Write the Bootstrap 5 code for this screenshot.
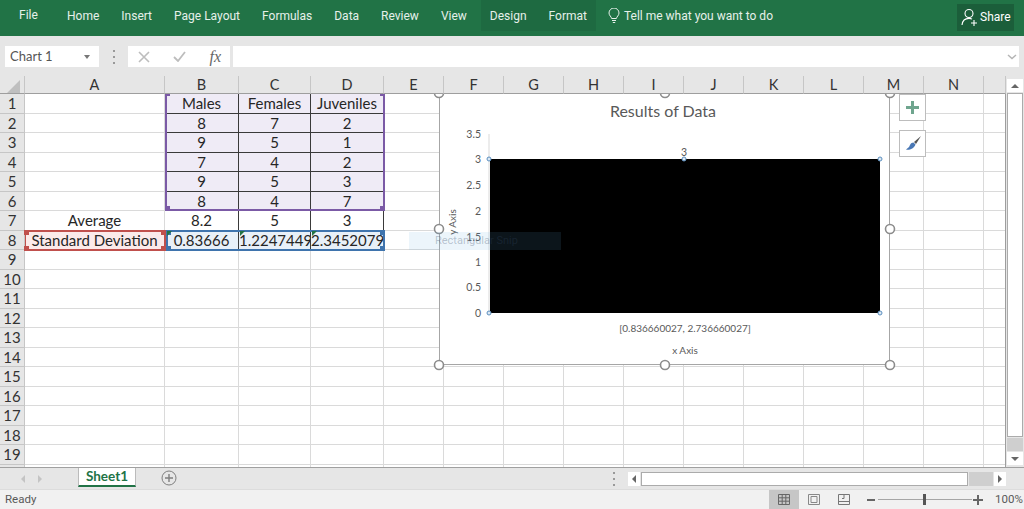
<!DOCTYPE html>
<html lang="en">
<head>
    <meta charset="UTF-8">
    <title>Results of Data - Excel</title>
    <link href="https://cdn.jsdelivr.net/npm/bootstrap@5.3.0/dist/css/bootstrap.min.css" rel="stylesheet">
    <style>
        html, body { height: 100%; }
        body { overflow: hidden; background: #e6e6e6; font-family: Roboto, sans-serif; }
        .xl-app { height: 509px; width: 1024px; }

        .xl-ribbon { height: 36px; background: #217346; color: #e6f0ea; font-size: 12px; padding-bottom: 5px; }
        .xl-file { width: 56px; padding-left: 19px; margin-top: -1px; }
        .xl-tab { padding: 0 11px; }
        .xl-tools { margin-left: 3px; padding: 0 2px; height: 31px; background: #1e6a41; }
        .xl-tools .xl-tab { padding: 0 7px 0 7px; }
        .xl-tools .xl-tab + .xl-tab { padding-left: 15px; }
        .xl-tell { margin-left: 12px; gap: 4px; }
        .xl-share { margin-left: auto; margin-right: 10px; margin-top: 3px; width: 57px; height: 27px; background: #1b5e3a; gap: 2px; color: #fff; padding-left: 4px; }

        .xl-fbar { height: 40px; padding: 10px 5px 9px; }
        .xl-namebox { width: 94px; background: #fff; font-family: Lato, sans-serif; font-size: 13px; color: #555; padding: 0 5px; }
        .xl-caret { width: 0; height: 0; border: 3px solid transparent; border-top: 4px solid #777; border-bottom: 0; }
        .xl-grip { width: 29px; }
        .xl-grip i { display: block; width: 2px; height: 2px; margin: 2px 0; background: #999; }
        .xl-fbtns { width: 102px; background: #fff; padding: 0 9px 0 10px; margin-right: 3px; }
        .xl-fx { font-family: "Liberation Serif", serif; font-style: italic; font-size: 16px; color: #666; }
        .xl-input { flex: 1; background: #fff; padding-right: 2px; }

        .xl-sheet { height: 391px; }
        .xl-main { width: 1006px; }
        .xl-cols, .xl-body { display: grid; grid-template-columns: 25px 140px 74px 72px 73px repeat(10, 60px) 22px; }
        .xl-cols { height: 18px; grid-template-rows: 18px; font-family: Lato, sans-serif; font-size: 14.5px; color: #333; }
        .xl-col { border-right: 1px solid #c6c6c6; border-bottom: 1px solid #9e9e9e; line-height: 18px; text-align: center; }
        .xl-corner { border-bottom: 1px solid #9e9e9e; border-right: 1px solid #c6c6c6; }
        .xl-corner svg { display: block; }
        .xl-wrap { height: 373px; background: #fff; border-right: 1px solid #9e9e9e; }
        .xl-body { grid-auto-rows: 19.5px; font-family: Lato, sans-serif; font-size: 15px; color: #262626; }
        .xl-cell { border-right: 1px solid #dadada; border-bottom: 1px solid #dadada; line-height: 19px; text-align: center; white-space: nowrap; overflow: hidden; }
        .xl-row { background: #e6e6e6; border-right: 1px solid #c6c6c6; border-bottom: 1px solid #c6c6c6; color: #333; }
        .xl-dark { border-color: #3a3a3a; }
        .xl-purple { background: #efebf6; }
        .xl-red { background: #fbeaea; }
        .xl-blue { background: #e8f0f8; }

        .xl-range { position: absolute; pointer-events: none; }
        .xl-range b { position: absolute; width: 5px; height: 5px; }
        .xl-range b:nth-child(1) { left: -2px; top: -2px; }
        .xl-range b:nth-child(2) { right: -2px; top: -2px; }
        .xl-range b:nth-child(3) { left: -2px; bottom: -2px; }
        .xl-range b:nth-child(4) { right: -2px; bottom: -2px; }
        .xl-r-purple { left: 165px; top: -1px; width: 220px; height: 118px; border-left: 2px solid #7b5aa6; border-right: 2px solid #7b5aa6; border-bottom: 2px solid #7b5aa6; }
        .xl-r-purple b { background: #7b5aa6; }
        .xl-r-red { left: 25px; top: 136px; width: 141px; height: 21px; border: 2px solid #c0504d; border-left-width: 1px; }
        .xl-r-red b { background: #c0504d; }
        .xl-r-blue { left: 166px; top: 136px; width: 219px; height: 21px; border: 2px solid #3f74ad; }
        .xl-r-blue b { background: #3f74ad; }
        .xl-flag { position: absolute; top: 137px; width: 0; height: 0; border-top: 5px solid #217346; border-right: 5px solid transparent; }

        .xl-chart { position: absolute; left: 439px; top: -1px; width: 451px; height: 272px; background: #fff; border: 1px solid #a6a6a6; }
        .xl-chart svg { position: absolute; left: -1px; top: -1px; overflow: visible; font-family: Lato, sans-serif; }
        .xl-float { position: absolute; left: 899px; width: 27px; height: 27px; background: #fff; border: 1px solid #bdbdbd; }
        .xl-snip { position: absolute; left: 409px; top: 138px; width: 152px; height: 18px; background: rgba(100, 170, 220, .12); font-size: 11px; line-height: 18px; color: rgba(50, 70, 100, .3); padding-left: 26px; }

        .xl-vbar { width: 18px; padding: 3px 1px 2px 1px; gap: 1px; }
        .xl-sbtn { background: #fff; flex: none; }
        .xl-up { height: 13px; }
        .xl-thumb { height: 344px; background: #fff; border: 1px solid #ababab; }
        .xl-track { flex: 1; background: #cfcfcf; }
        .xl-down { height: 13px; }
        .xl-arr-u { width: 0; height: 0; border: 4px solid transparent; border-bottom: 4px solid #666; border-top: 0; }
        .xl-arr-d { width: 0; height: 0; border: 4px solid transparent; border-top: 4px solid #666; border-bottom: 0; }
        .xl-arr-l { width: 0; height: 0; border: 4px solid transparent; border-right: 4px solid #666; border-left: 0; }
        .xl-arr-r { width: 0; height: 0; border: 4px solid transparent; border-left: 4px solid #666; border-right: 0; }

        .xl-tabs { height: 22px; border-top: 1px solid #a0a0a0; }
        .xl-nav { width: 78px; gap: 13px; padding-left: 21px; }
        .xl-nav .xl-arr-l { border-right-color: #c4c4c4; }
        .xl-nav .xl-arr-r { border-left-color: #c4c4c4; }
        .xl-sheet-tab { width: 58px; height: 19px; background: #fff; color: #217346; font-weight: 700; font-family: Lato, sans-serif; font-size: 13.5px; line-height: 17px; text-align: center; border-left: 1px solid #bbb; border-right: 1px solid #bbb; border-bottom: 2px solid #217346; }
        .xl-add { margin-left: 25px; margin-top: 2px; }
        .xl-add svg { display: block; }
        .xl-hgrip { margin-left: auto; width: 28px; padding-left: 13px; }
        .xl-hgrip i { display: block; width: 2px; height: 2px; margin: 2px 0; background: #999; }
        .xl-hbar { width: 378px; height: 14px; margin-right: 18px; gap: 1px; }
        .xl-hbtn { width: 12px; height: 14px; background: #fff; }
        .xl-hthumb { width: 327px; background: #fff; border: 1px solid #ababab; }
        .xl-htrack { flex: 1; background: #cfcfcf; }

        .xl-status { height: 20px; background: #f1f1f1; color: #595959; font-size: 11.5px; padding-left: 5px; border-top: 1px solid #dcdcdc; }
        .xl-view { width: 30px; height: 100%; }
        .xl-view.active { background: #c6c6c6; }
        .xl-zoom { margin-left: auto; }
        .xl-slider { width: 94px; height: 1px; background: #a6a6a6; margin: 0 1px 0 3px; }
        .xl-knob { left: 45px; top: -5px; width: 3px; height: 11px; background: #555; }
        .xl-pct { width: 41px; padding-left: 12px; }
    </style>
</head>
<body>
    <div class="xl-app d-flex flex-column">
        <div class="xl-ribbon d-flex align-items-center flex-none">
            <div class="xl-file">File</div>
            <div class="xl-tab">Home</div>
            <div class="xl-tab">Insert</div>
            <div class="xl-tab">Page Layout</div>
            <div class="xl-tab">Formulas</div>
            <div class="xl-tab">Data</div>
            <div class="xl-tab">Review</div>
            <div class="xl-tab">View</div>
            <div class="xl-tools d-flex align-items-center">
                <div class="xl-tab">Design</div>
                <div class="xl-tab">Format</div>
            </div>
            <div class="xl-tell d-flex align-items-center">
                <svg width="12" height="16" viewBox="0 0 12 16" fill="none" stroke="#e6f0ea" stroke-width="1"><path d="M3.6 10.5C3.4 8.6 1 7.6 1 5a5 5 0 0 1 10 0c0 2.6-2.4 3.6-2.6 5.5z"/><path d="M4 12.5h4M4.8 14.5h2.4"/></svg>
                <span>Tell me what you want to do</span>
            </div>
            <div class="xl-share d-flex align-items-center">
                <svg width="17" height="19" viewBox="0 0 17 19" fill="none" stroke="#fff" stroke-width="1.1"><circle cx="8" cy="5.5" r="4"/><path d="M1 17c.4-4 3-6.6 7-6.6 1.2 0 2.2.2 3 .7M13 12v6M10 15h6"/></svg>
                <span>Share</span>
            </div>
        </div>

        <div class="xl-fbar d-flex flex-none">
            <div class="xl-namebox d-flex align-items-center justify-content-between">
                <span>Chart 1</span><span class="xl-caret me-1"></span>
            </div>
            <div class="xl-grip d-flex flex-column align-items-center justify-content-center"><i></i><i></i><i></i></div>
            <div class="xl-fbtns d-flex align-items-center justify-content-between">
                <svg width="12" height="12" viewBox="0 0 12 12" stroke="#bdbdbd" stroke-width="1.6"><path d="M1 1l10 10M11 1L1 11"/></svg>
                <svg width="13" height="11" viewBox="0 0 13 11" fill="none" stroke="#bdbdbd" stroke-width="1.8"><path d="M1 6l4 4 7-9"/></svg>
                <span class="xl-fx">fx</span>
            </div>
            <div class="xl-input d-flex align-items-center justify-content-end">
                <svg width="10" height="6" viewBox="0 0 10 6" fill="none" stroke="#b5b5b5" stroke-width="1.5"><path d="M1 1l4 3.500L9 1"/></svg>
            </div>
        </div>

        <div class="xl-sheet d-flex flex-none">
            <div class="xl-main">
                <div class="xl-cols" id="cols"></div>
                <div class="xl-wrap position-relative overflow-hidden">
                    <div class="xl-body" id="grid"></div>

                    <div class="xl-range xl-r-purple"><b></b><b></b><b></b><b></b></div>
                    <div class="xl-range xl-r-red"><b></b><b></b><b></b><b></b></div>
                    <div class="xl-range xl-r-blue"><b></b><b></b><b></b><b></b></div>
                    <span class="xl-flag" style="left: 167px"></span>
                    <span class="xl-flag" style="left: 240px"></span>
                    <span class="xl-flag" style="left: 312px"></span>

                    <div class="xl-chart">
                        <svg width="451" height="272" viewBox="439 93 451 272">
                            <text x="663" y="117" text-anchor="middle" font-size="16" fill="#595959">Results of Data</text>
                            <g font-size="10.5" fill="#595959" text-anchor="end">
                                <text x="481" y="138">3.5</text>
                                <text x="481" y="163">3</text>
                                <text x="481" y="189">2.5</text>
                                <text x="481" y="215">2</text>
                                <text x="481" y="241">1.5</text>
                                <text x="481" y="266">1</text>
                                <text x="481" y="291">0.5</text>
                                <text x="481" y="317">0</text>
                            </g>
                            <line x1="489" y1="134" x2="489" y2="313" stroke="#d9d9d9"/>
                            <rect x="490" y="159" width="390" height="154" fill="#000"/>
                            <text x="684" y="156" text-anchor="middle" font-size="10.5" fill="#595959">3</text>
                            <g fill="#dbe8f3" stroke="#5b8fbf">
                                <circle cx="489" cy="159" r="2"/>
                                <circle cx="684" cy="159" r="2"/>
                                <circle cx="880" cy="159" r="2"/>
                                <circle cx="489" cy="313" r="2"/>
                                <circle cx="880" cy="313" r="2"/>
                            </g>
                            <text x="685" y="332" text-anchor="middle" font-size="10" fill="#595959">[0.836660027, 2.736660027]</text>
                            <text x="685" y="354" text-anchor="middle" font-size="10" fill="#595959">x Axis</text>
                            <text transform="translate(456 222) rotate(-90)" text-anchor="middle" font-size="10" fill="#595959">y Axis</text>
                            <g fill="#fff" stroke="#8c8c8c" stroke-width="1.6">
                                <circle cx="439" cy="93" r="4.5"/>
                                <circle cx="665" cy="93" r="4.5"/>
                                <circle cx="890" cy="93" r="4.5"/>
                                <circle cx="439" cy="229" r="4.5"/>
                                <circle cx="890" cy="229" r="4.5"/>
                                <circle cx="439" cy="365" r="4.5"/>
                                <circle cx="665" cy="365" r="4.5"/>
                                <circle cx="890" cy="365" r="4.5"/>
                            </g>
                        </svg>
                    </div>

                    <div class="xl-float d-flex align-items-center justify-content-center" style="top: 0">
                        <svg width="13" height="13" viewBox="0 0 13 13" fill="#6fa58e"><path d="M5 0h3v5h5v3H8v5H5V8H0V5h5z"/></svg>
                    </div>
                    <div class="xl-float d-flex align-items-center justify-content-center" style="top: 36px">
                        <svg width="16" height="15" viewBox="0 0 16 15"><path d="M16 0L9 6l2 2z" fill="#555"/><path d="M8.500 6.500c-3 .2-3.600 3-4.500 4.500L1 13.500c3 .8 8-.5 9.500-5z" fill="#4a78b5"/></svg>
                    </div>

                    <div class="xl-snip">Rectangular Snip</div>
                </div>
            </div>
            <div class="xl-vbar d-flex flex-column">
                <div class="xl-sbtn xl-up d-flex align-items-center justify-content-center"><span class="xl-arr-u"></span></div>
                <div class="xl-thumb flex-none"></div>
                <div class="xl-track"></div>
                <div class="xl-sbtn xl-down d-flex align-items-center justify-content-center"><span class="xl-arr-d"></span></div>
            </div>
        </div>

        <div class="xl-tabs d-flex flex-none">
            <div class="xl-nav d-flex align-items-center"><span class="xl-arr-l"></span><span class="xl-arr-r"></span></div>
            <div class="xl-sheet-tab">Sheet1</div>
            <div class="xl-add">
                <svg width="16" height="16" viewBox="0 0 16 16" fill="none" stroke="#7f7f7f"><circle cx="8" cy="8" r="7"/><path d="M8 4v8M4 8h8" stroke-width="1.4"/></svg>
            </div>
            <div class="xl-hgrip d-flex flex-column justify-content-center"><i></i><i></i><i></i></div>
            <div class="xl-hbar d-flex align-self-center">
                <div class="xl-hbtn d-flex align-items-center justify-content-center"><span class="xl-arr-l"></span></div>
                <div class="xl-hthumb"></div>
                <div class="xl-htrack"></div>
                <div class="xl-hbtn d-flex align-items-center justify-content-center"><span class="xl-arr-r"></span></div>
            </div>
        </div>

        <div class="xl-status d-flex align-items-center flex-none">
            <span>Ready</span>
            <div class="xl-zoom d-flex align-items-center h-100">
                <div class="xl-view active d-flex align-items-center justify-content-center">
                    <svg width="12" height="11" viewBox="0 0 12 11" fill="none" stroke="#666"><path d="M.5.500h11v10H.5zM.5 3.800h11M.5 7.200h11M4.200.500v10M7.800.500v10"/></svg>
                </div>
                <div class="xl-view d-flex align-items-center justify-content-center">
                    <svg width="12" height="11" viewBox="0 0 12 11" fill="none" stroke="#888"><path d="M.5.500h11v10H.5zM3 2.500h6v6H3z"/></svg>
                </div>
                <div class="xl-view d-flex align-items-center justify-content-center">
                    <svg width="12" height="11" viewBox="0 0 12 11" fill="none" stroke="#777"><path d="M.5.500h11v10H.5zM.5 7.500h11M6 .500v4h-2"/></svg>
                </div>
                <svg class="ms-2" width="8" height="8" viewBox="0 0 8 8" fill="#666"><path d="M0 3h8v2H0z"/></svg>
                <div class="xl-slider position-relative"><div class="xl-knob position-absolute"></div></div>
                <svg width="10" height="10" viewBox="0 0 10 10" fill="#666"><path d="M4 0h2v4h4v2H6v4H4V6H0V4h4z"/></svg>
                <div class="xl-pct">100%</div>
            </div>
        </div>
    </div>

    <script src="https://cdn.jsdelivr.net/npm/bootstrap@5.3.0/dist/js/bootstrap.bundle.min.js"></script>
    <script>
        const letters = ['A','B','C','D','E','F','G','H','I','J','K','L','M','N',''];
        const data = {
            1: ['', 'Males', 'Females', 'Juveniles'],
            2: ['', '8', '7', '2'],
            3: ['', '9', '5', '1'],
            4: ['', '7', '4', '2'],
            5: ['', '9', '5', '3'],
            6: ['', '8', '4', '7'],
            7: ['Average', '8.2', '5', '3'],
            8: ['Standard Deviation', '0.83666', '1.2247449', '2.3452079']
        };

        // column headers, with the select-all triangle in the corner
        let head = '<div class="xl-corner d-flex align-items-end justify-content-end"><svg width="14" height="14" viewBox="0 0 14 14" class="me-1"><path d="M14 1v13H1z" fill="#bfbfbf"/></svg></div>';
        letters.forEach(function(l) {
            head += '<div class="xl-col">' + l + '</div>';
        });
        document.getElementById('cols').innerHTML = head;

        let html = '';
        for (let r = 1; r <= 20; r++) {
            html += '<div class="xl-cell xl-row">' + r + '</div>';
            letters.forEach(function(l, c) {
                let cls = 'xl-cell';
                if (r <= 8 && c >= 1 && c <= 3) cls += ' xl-dark';
                if (r <= 6 && c >= 1 && c <= 3) cls += ' xl-purple';
                if (r === 8 && c === 0) cls += ' xl-red';
                if (r === 8 && c >= 1 && c <= 3) cls += ' xl-blue';
                const text = data[r] && data[r][c] ? data[r][c] : '';
                html += '<div class="' + cls + '">' + text + '</div>';
            });
        }
        document.getElementById('grid').innerHTML = html;
    </script>
</body>
</html>
